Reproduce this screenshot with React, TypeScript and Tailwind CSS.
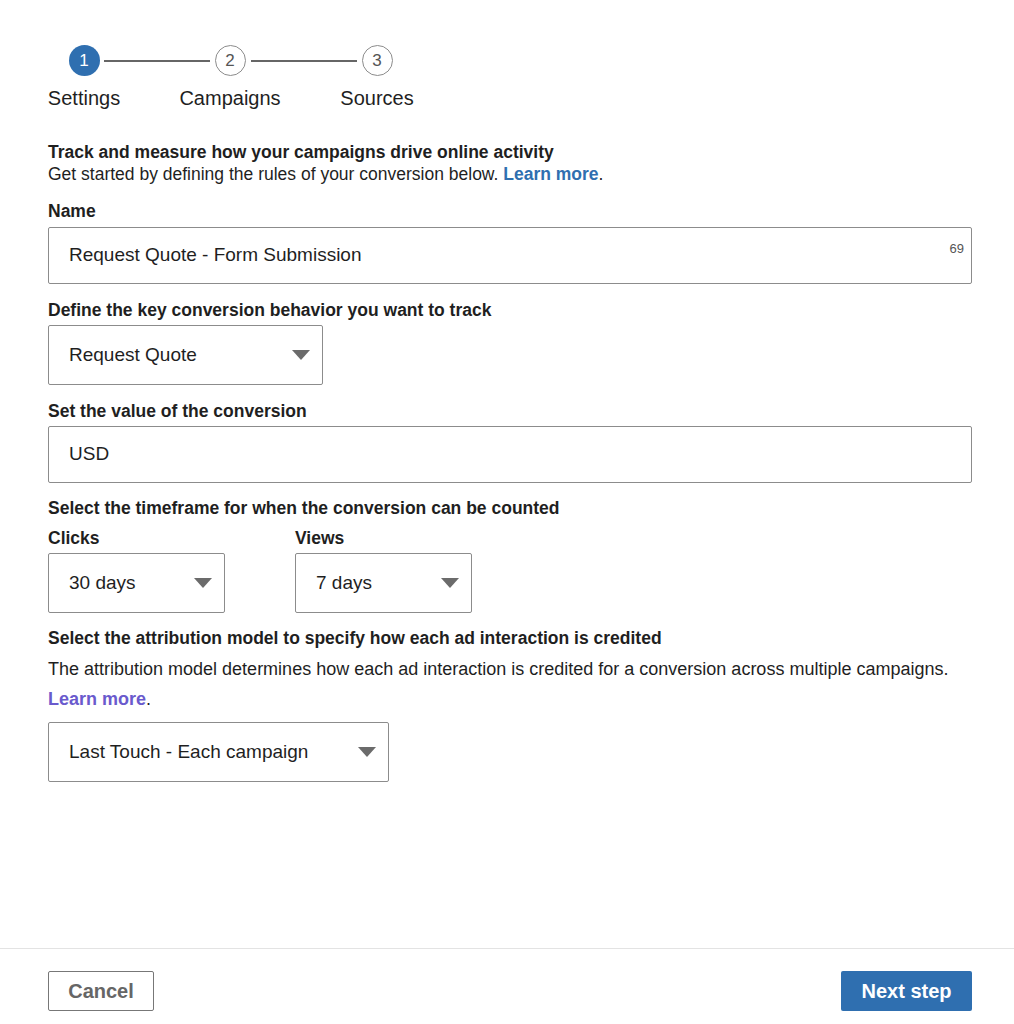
import React from "react";

const Caret = () => (
  <svg width="18" height="10" viewBox="0 0 18 10" className="shrink-0">
    <path d="M0 0 L18 0 L9 10 Z" fill="#6b6b6b" />
  </svg>
);

const Select = ({ label, width }: { label: string; width: string }) => (
  <div className={`${width} h-[60px] border border-[#8c8c8c] rounded-[2px] flex items-center justify-between pl-5 pr-3 text-[19px] text-[#1f1f1f]`}>
    <span>{label}</span>
    <Caret />
  </div>
);

const steps = [
  { n: "1", label: "Settings", active: true },
  { n: "2", label: "Campaigns", active: false },
  { n: "3", label: "Sources", active: false },
];

export default function App() {
  return (
    <div className="w-[1014px] h-[1024px] bg-white flex flex-col text-[#1f1f1f]" style={{ fontFamily: '"Liberation Sans", Arial, sans-serif' }}>
      <div className="flex-1 pl-12 pr-[42px]">
        {/* stepper */}
        <div className="relative h-[112px]">
          {steps.map((s, i) => (
            <div key={s.n} className="absolute top-[45px] flex flex-col items-center w-[120px]" style={{ left: [-24, 122, 269][i] }}>
              <div className={`w-[31px] h-[31px] rounded-full flex items-center justify-center text-[17px] ${s.active ? "bg-[#2f6fb0] text-white" : "border border-[#8c8c8c] text-[#555] bg-white"}`}>{s.n}</div>
              <div className="mt-[10px] text-[20px] leading-6 whitespace-nowrap">{s.label}</div>
            </div>
          ))}
          <div className="absolute top-[60px] left-[56px] w-[106px] h-[2px] bg-[#666]" />
          <div className="absolute top-[60px] left-[203px] w-[106px] h-[2px] bg-[#666]" />
        </div>

        <div className="mt-[30px] text-[17.5px] font-bold leading-5">Track and measure how your campaigns drive online activity</div>
        <div className="text-[17.5px] leading-6">Get started by defining the rules of your conversion below. <span className="text-[#2f6fb0] font-bold">Learn more</span>.</div>

        <div className="mt-[15px] text-[17.5px] font-bold leading-5">Name</div>
        <div className="relative mt-[6px] h-[57px] border border-[#8c8c8c] rounded-[2px] flex items-center pl-5 text-[19px]">
          Request Quote - Form Submission
          <span className="absolute right-[7px] top-[11px] text-[13px] text-[#555]">69</span>
        </div>

        <div className="mt-[16px] text-[17.5px] font-bold leading-5">Define the key conversion behavior you want to track</div>
        <div className="mt-[5px]"><Select label="Request Quote" width="w-[275px]" /></div>

        <div className="mt-[16px] text-[17.5px] font-bold leading-5">Set the value of the conversion</div>
        <div className="mt-[5px] h-[57px] border border-[#8c8c8c] rounded-[2px] flex items-center pl-5 text-[19px]">USD</div>

        <div className="mt-[15px] text-[17.5px] font-bold leading-5">Select the timeframe for when the conversion can be counted</div>
        <div className="mt-[10px] flex gap-[70px]">
          <div>
            <div className="text-[17.5px] font-bold leading-5">Clicks</div>
            <div className="mt-[5px]"><Select label="30 days" width="w-[177px]" /></div>
          </div>
          <div>
            <div className="text-[17.5px] font-bold leading-5">Views</div>
            <div className="mt-[5px]"><Select label="7 days" width="w-[177px]" /></div>
          </div>
        </div>

        <div className="mt-[15px] text-[17.5px] font-bold leading-5">Select the attribution model to specify how each ad interaction is credited</div>
        <div className="mt-[6px] text-[18px] leading-[30px] whitespace-nowrap">The attribution model determines how each ad interaction is credited for a conversion across multiple campaigns.<br /><span className="text-[#6a5acd] font-bold">Learn more</span>.</div>
        <div className="mt-[8px]"><Select label="Last Touch - Each campaign" width="w-[341px]" /></div>
      </div>

      <div className="h-[76px] border-t border-[#e3e3e3] pl-12 pr-[42px] flex items-center justify-between pt-[8px]">
        <button className="w-[106px] h-[40px] border border-[#777] rounded-[2px] text-[20px] font-bold text-[#666]">Cancel</button>
        <button className="w-[131px] h-[40px] bg-[#2f6fb0] rounded-[2px] text-[20px] font-bold text-white">Next step</button>
      </div>
    </div>
  );
}
